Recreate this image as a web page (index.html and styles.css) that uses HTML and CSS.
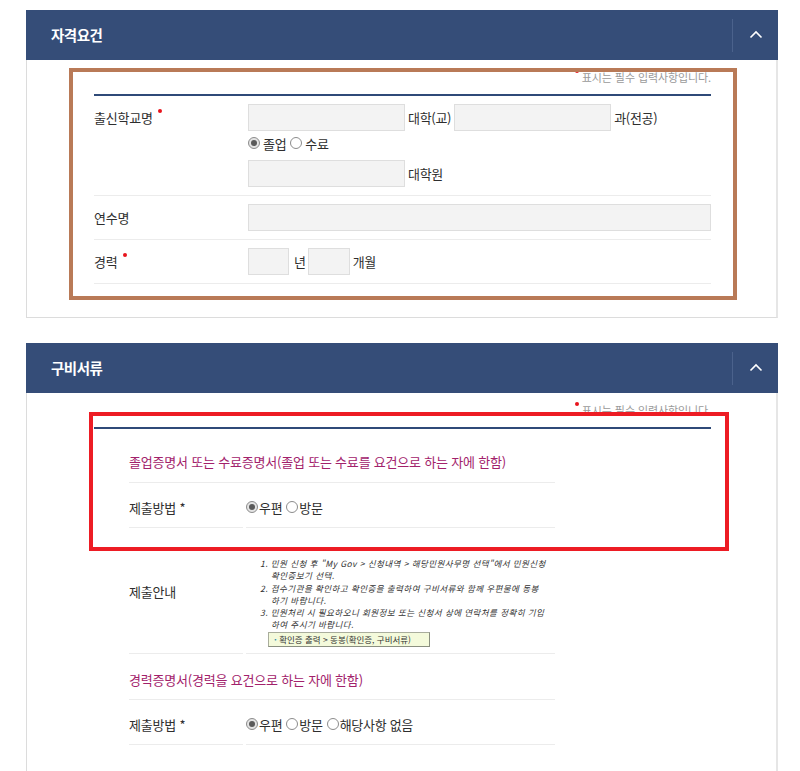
FILE: index.html
```html
<!DOCTYPE html>
<html lang="ko">
<head>
<meta charset="utf-8">
<title>자격요건 / 구비서류</title>
<link rel="stylesheet" href="styles.css">
</head>
<body>
<div class="page">
  <section class="panel">
    <div class="panel-head">
      <h2 class="panel-title">자격요건</h2>
      <div class="panel-toggle">
        <svg width="14" height="9" viewBox="0 0 14 9"><polyline points="1.5,7.5 7,2 12.5,7.5" fill="none" stroke="#fff" stroke-width="1.6"/></svg>
      </div>
    </div>
    <div class="panel-body">
      <div class="req-note"><span class="dot"></span>표시는 필수 입력사항입니다.</div>
      <div class="form">
        <div class="form-row">
          <div class="form-label">출신학교명<span class="dot dot-label"></span></div>
          <div class="form-value">
            <div class="line">
              <span class="field w157"></span><span class="unit">대학(교)</span>
              <span class="field w157"></span><span class="unit">과(전공)</span>
            </div>
            <div class="radios radios-wide">
              <span class="radio checked"></span><span class="rtext">졸업</span>
              <span class="radio"></span><span class="rtext">수료</span>
            </div>
            <div class="line line-gap">
              <span class="field w157"></span><span class="unit">대학원</span>
            </div>
          </div>
        </div>
        <div class="form-row">
          <div class="form-label">연수명</div>
          <div class="form-value">
            <div class="line"><span class="field full"></span></div>
          </div>
        </div>
        <div class="form-row">
          <div class="form-label">경력<span class="dot dot-label"></span></div>
          <div class="form-value">
            <div class="line">
              <span class="field w41"></span><span class="unit unit-year">년</span>
              <span class="field w42"></span><span class="unit">개월</span>
            </div>
          </div>
        </div>
      </div>
      <div class="mark mark-brown"></div>
    </div>
  </section>

  <section class="panel panel-second">
    <div class="panel-head">
      <h2 class="panel-title">구비서류</h2>
      <div class="panel-toggle">
        <svg width="14" height="9" viewBox="0 0 14 9"><polyline points="1.5,7.5 7,2 12.5,7.5" fill="none" stroke="#fff" stroke-width="1.6"/></svg>
      </div>
    </div>
    <div class="panel-body panel-body-docs">
      <div class="req-note"><span class="dot"></span>표시는 필수 입력사항입니다.</div>
      <div class="form form-docs">
        <div class="docs">
          <div class="doc-heading first">졸업증명서 또는 수료증명서(졸업 또는 수료를 요건으로 하는 자에 한함)</div>
          <div class="doc-row">
            <div class="doc-label">제출방법 *</div>
            <div class="doc-value">
              <span class="radio checked"></span><span class="rtext">우편</span>
              <span class="radio"></span><span class="rtext">방문</span>
            </div>
          </div>
          <div class="doc-row doc-row-info">
            <div class="doc-label">제출안내</div>
            <div class="doc-value doc-info">
              <div class="info">
                <div class="info-line">1. 민원 신청 후 "My Gov &gt; 신청내역 &gt; 해당민원사무명 선택"에서 민원신청</div>
                <div class="info-line indent">확인증보기 선택.</div>
                <div class="info-line">2. 접수기관을 확인하고 확인증을 출력하여 구비서류와 함께 우편물에 동봉</div>
                <div class="info-line indent">하기 바랍니다.</div>
                <div class="info-line">3. 민원처리 시 필요하오니 회원정보 또는 신청서 상에 연락처를 정확히 기입</div>
                <div class="info-line indent">하여 주시기 바랍니다.</div>
                <div class="info-box"><span class="info-bullet">·</span> 확인증 출력 &gt; 동봉(확인증, 구비서류)</div>
              </div>
            </div>
          </div>
          <div class="doc-heading">경력증명서(경력을 요건으로 하는 자에 한함)</div>
          <div class="doc-row">
            <div class="doc-label">제출방법 *</div>
            <div class="doc-value">
              <span class="radio checked"></span><span class="rtext">우편</span>
              <span class="radio"></span><span class="rtext">방문</span>
              <span class="radio"></span><span class="rtext">해당사항 없음</span>
            </div>
          </div>
        </div>
      </div>
      <div class="mark mark-red"></div>
    </div>
  </section>
</div>
</body>
</html>
```

FILE: styles.css
```css
* { box-sizing: border-box; }

html, body {
  margin: 0;
  padding: 0;
  background: #fff;
}

body {
  font-family: "Noto Sans CJK KR", "Noto Sans", sans-serif;
  color: #2e2e2e;
  font-size: 13px;
}

.page {
  width: 752px;
  margin-left: 26px;
  padding-top: 10px;
}

.panel-second {
  margin-top: 25px;
}

.panel-head {
  height: 50px;
  background: #354d78;
  display: flex;
  align-items: center;
}

.panel-title {
  flex: 1;
  margin: 0;
  padding-left: 25px;
  color: #fff;
  font-size: 14.5px;
  font-weight: bold;
  letter-spacing: -0.5px;
  line-height: 20px;
}

.panel-toggle {
  width: 46px;
  height: 33px;
  border-left: 1px solid #4b628c;
  display: flex;
  align-items: center;
  justify-content: center;
}

.panel-toggle svg {
  display: block;
  margin-top: -1px;
}

.panel-body {
  position: relative;
  border-left: 1px solid #dcdcdc;
  border-right: 2px solid #e6e6e6;
  border-bottom: 1px solid #dcdcdc;
  padding: 9px 65px 33px 67px;
}

.panel-body-docs {
  border-bottom: none;
  padding-bottom: 40px;
}

.req-note {
  height: 16px;
  line-height: 16px;
  font-size: 11px;
  color: #9a9a9a;
  text-align: right;
  letter-spacing: -0.1px;
}

.dot {
  display: inline-block;
  width: 4px;
  height: 4px;
  border-radius: 50%;
  background: #e8141c;
  vertical-align: 9px;
  margin-right: 3px;
}

.dot-label {
  margin-left: 5px;
  margin-right: 0;
  vertical-align: 10px;
}

.form {
  margin-top: 9px;
  border-top: 2px solid #2f4a78;
}

.form-row {
  display: grid;
  grid-template-columns: 154px 1fr;
  border-bottom: 1px solid #ececec;
  padding: 8px 0;
}

.form-label {
  height: 27px;
  line-height: 27px;
  font-size: 13px;
  letter-spacing: -0.2px;
}

.line {
  display: flex;
  align-items: center;
  height: 27px;
}

.line-gap {
  margin-top: 8px;
}

.field {
  display: block;
  height: 27px;
  background: #f3f3f3;
  border: 1px solid #dedede;
}

.w157 { width: 157px; }
.w41 { width: 41px; }
.w42 { width: 42px; }
.full { width: 100%; }

.unit {
  margin: 0 3px;
  font-size: 13px;
  letter-spacing: -0.3px;
}

.unit-year {
  margin: 0 2px 0 5px;
}

.radios {
  display: flex;
  align-items: center;
  height: 18px;
  margin-top: 3px;
}

.radio {
  display: inline-block;
  width: 12px;
  height: 12px;
  border: 1px solid #8c8c8c;
  border-radius: 50%;
  background: #fff;
  position: relative;
  vertical-align: -1px;
}

.radio.checked {
  background: #e4e4e4;
}

.radio.checked::after {
  content: "";
  position: absolute;
  left: 2px;
  top: 2px;
  width: 6px;
  height: 6px;
  border-radius: 50%;
  background: #5a5a5a;
}

.rtext {
  font-size: 13px;
  margin-left: 1px;
  margin-right: 4px;
  letter-spacing: -0.3px;
}

.radios-wide .rtext {
  margin-left: 3px;
  margin-right: 4px;
}

.form-docs {
  border-top: 2px solid #2f4a78;
}

.docs {
  margin-left: 35px;
  width: 426px;
}

.doc-heading {
  font-size: 13px;
  line-height: 17px;
  color: #a2216b;
  padding: 17px 0 11px;
  border-bottom: 1px solid #ececec;
  letter-spacing: -0.2px;
  white-space: nowrap;
}

.doc-heading.first {
  padding-top: 24px;
  padding-bottom: 12px;
}

.doc-row {
  display: grid;
  grid-template-columns: 114px 309px;
  column-gap: 3px;
}

.doc-label,
.doc-value {
  border-bottom: 1px solid #ececec;
  height: 45px;
  display: flex;
  align-items: center;
  padding-top: 4px;
  font-size: 13px;
  white-space: nowrap;
}

.doc-label {
  letter-spacing: -0.2px;
}

.doc-row-info .doc-label,
.doc-row-info .doc-value {
  height: 126px;
}

.doc-row-info .doc-label {
  padding-top: 2px;
}

.doc-info {
  align-items: flex-start;
  padding-top: 29px;
  padding-left: 14px;
}

.info {
  font-size: 8.5px;
  font-style: italic;
  line-height: 12.3px;
  color: #333;
  letter-spacing: 0.45px;
}

.info-line {
  white-space: nowrap;
}

.info-line.indent {
  padding-left: 11px;
}

.info-box {
  display: inline-block;
  margin-top: 1px;
  margin-left: 8px;
  width: 162px;
  height: 15px;
  line-height: 13px;
  font-style: normal;
  font-size: 8.5px;
  background: #f4fadb;
  border: 1px solid #a9ad9c;
  border-right-color: #8a8f80;
  border-bottom-color: #8a8f80;
  padding-left: 5px;
  white-space: nowrap;
  letter-spacing: 0;
}

.info-bullet {
  color: #2a8aa8;
  font-weight: bold;
}

.mark {
  position: absolute;
  pointer-events: none;
}

.mark-brown {
  left: 42px;
  top: 8px;
  width: 668px;
  height: 232px;
  border: 4px solid #b97a57;
}

.mark-red {
  left: 62px;
  top: 19px;
  width: 640px;
  height: 139px;
  border: 4px solid #ed1c24;
}
```
